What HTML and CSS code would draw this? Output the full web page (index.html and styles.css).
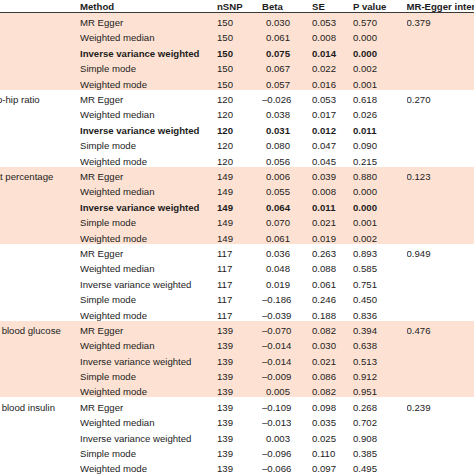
FILE: index.html
```html
<!DOCTYPE html>
<html>
<head>
<meta charset="utf-8">
<link rel="stylesheet" href="styles.css">
</head>
<body>
<div class="frame">
<table class="mr">
<colgroup>
<col class="c-label"><col class="c-method"><col class="c-n"><col class="c-beta"><col class="c-se"><col class="c-p"><col class="c-int">
</colgroup>
<thead>
<tr><th></th><th>Method</th><th>nSNP</th><th>Beta</th><th>SE</th><th>P value</th><th>MR-Egger intercept</th></tr>
</thead>
<tbody class="pink">
<tr><td></td><td>MR Egger</td><td>150</td><td class="num">0.030</td><td>0.053</td><td>0.570</td><td>0.379</td></tr>
<tr><td></td><td>Weighted median</td><td>150</td><td class="num">0.061</td><td>0.008</td><td>0.000</td><td></td></tr>
<tr class="b"><td></td><td>Inverse variance weighted</td><td>150</td><td class="num">0.075</td><td>0.014</td><td>0.000</td><td></td></tr>
<tr><td></td><td>Simple mode</td><td>150</td><td class="num">0.067</td><td>0.022</td><td>0.002</td><td></td></tr>
<tr><td></td><td>Weighted mode</td><td>150</td><td class="num">0.057</td><td>0.016</td><td>0.001</td><td></td></tr>
</tbody>
<tbody>
<tr><td>Waist-to-hip ratio</td><td>MR Egger</td><td>120</td><td class="num">–0.026</td><td>0.053</td><td>0.618</td><td>0.270</td></tr>
<tr><td></td><td>Weighted median</td><td>120</td><td class="num">0.038</td><td>0.017</td><td>0.026</td><td></td></tr>
<tr class="b"><td></td><td>Inverse variance weighted</td><td>120</td><td class="num">0.031</td><td>0.012</td><td>0.011</td><td></td></tr>
<tr><td></td><td>Simple mode</td><td>120</td><td class="num">0.080</td><td>0.047</td><td>0.090</td><td></td></tr>
<tr><td></td><td>Weighted mode</td><td>120</td><td class="num">0.056</td><td>0.045</td><td>0.215</td><td></td></tr>
</tbody>
<tbody class="pink">
<tr><td>Body fat percentage</td><td>MR Egger</td><td>149</td><td class="num">0.006</td><td>0.039</td><td>0.880</td><td>0.123</td></tr>
<tr><td></td><td>Weighted median</td><td>149</td><td class="num">0.055</td><td>0.008</td><td>0.000</td><td></td></tr>
<tr class="b"><td></td><td>Inverse variance weighted</td><td>149</td><td class="num">0.064</td><td>0.011</td><td>0.000</td><td></td></tr>
<tr><td></td><td>Simple mode</td><td>149</td><td class="num">0.070</td><td>0.021</td><td>0.001</td><td></td></tr>
<tr><td></td><td>Weighted mode</td><td>149</td><td class="num">0.061</td><td>0.019</td><td>0.002</td><td></td></tr>
</tbody>
<tbody>
<tr><td></td><td>MR Egger</td><td>117</td><td class="num">0.036</td><td>0.263</td><td>0.893</td><td>0.949</td></tr>
<tr><td></td><td>Weighted median</td><td>117</td><td class="num">0.048</td><td>0.088</td><td>0.585</td><td></td></tr>
<tr><td></td><td>Inverse variance weighted</td><td>117</td><td class="num">0.019</td><td>0.061</td><td>0.751</td><td></td></tr>
<tr><td></td><td>Simple mode</td><td>117</td><td class="num">–0.186</td><td>0.246</td><td>0.450</td><td></td></tr>
<tr><td></td><td>Weighted mode</td><td>117</td><td class="num">–0.039</td><td>0.188</td><td>0.836</td><td></td></tr>
</tbody>
<tbody class="pink">
<tr><td>Fasting blood glucose</td><td>MR Egger</td><td>139</td><td class="num">–0.070</td><td>0.082</td><td>0.394</td><td>0.476</td></tr>
<tr><td></td><td>Weighted median</td><td>139</td><td class="num">–0.014</td><td>0.030</td><td>0.638</td><td></td></tr>
<tr><td></td><td>Inverse variance weighted</td><td>139</td><td class="num">–0.014</td><td>0.021</td><td>0.513</td><td></td></tr>
<tr><td></td><td>Simple mode</td><td>139</td><td class="num">–0.009</td><td>0.086</td><td>0.912</td><td></td></tr>
<tr><td></td><td>Weighted mode</td><td>139</td><td class="num">0.005</td><td>0.082</td><td>0.951</td><td></td></tr>
</tbody>
<tbody>
<tr><td>Fasting blood insulin</td><td>MR Egger</td><td>139</td><td class="num">–0.109</td><td>0.098</td><td>0.268</td><td>0.239</td></tr>
<tr><td></td><td>Weighted median</td><td>139</td><td class="num">–0.013</td><td>0.035</td><td>0.702</td><td></td></tr>
<tr><td></td><td>Inverse variance weighted</td><td>139</td><td class="num">0.003</td><td>0.025</td><td>0.908</td><td></td></tr>
<tr><td></td><td>Simple mode</td><td>139</td><td class="num">–0.096</td><td>0.110</td><td>0.385</td><td></td></tr>
<tr><td></td><td>Weighted mode</td><td>139</td><td class="num">–0.066</td><td>0.097</td><td>0.495</td><td></td></tr>
</tbody>
</table>
</div>
</body>
</html>
```
FILE: styles.css
```css
html, body {
  margin: 0;
  padding: 0;
  background: #ffffff;
}

.frame {
  width: 474px;
  height: 474px;
  overflow: hidden;
}

.mr {
  border-collapse: collapse;
  table-layout: fixed;
  width: 538px;
  margin-left: -31px;
  margin-top: -3.7px;
  font-family: "Liberation Sans", Arial, sans-serif;
  font-size: 9.6px;
  color: #1c1c1c;
}

.c-label { width: 111px; }
.c-method { width: 137px; }
.c-n { width: 45px; }
.c-beta { width: 50px; }
.c-se { width: 41px; }
.c-p { width: 53.5px; }
.c-int { width: 100.5px; }

.mr th,
.mr td {
  padding: 4.4px 0 0 0;
  line-height: 11px;
  height: 11px;
  text-align: left;
  white-space: nowrap;
  overflow: hidden;
  vertical-align: top;
}

.mr td:first-child {
  text-indent: -1.5px;
}

.mr th {
  font-weight: bold;
  border-bottom: 1px solid #3a3a3a;
}

.mr td.num {
  text-align: right;
  padding-right: 22px;
}

.pink td {
  background: #fde2d3;
}

.b td {
  font-weight: bold;
}
```
